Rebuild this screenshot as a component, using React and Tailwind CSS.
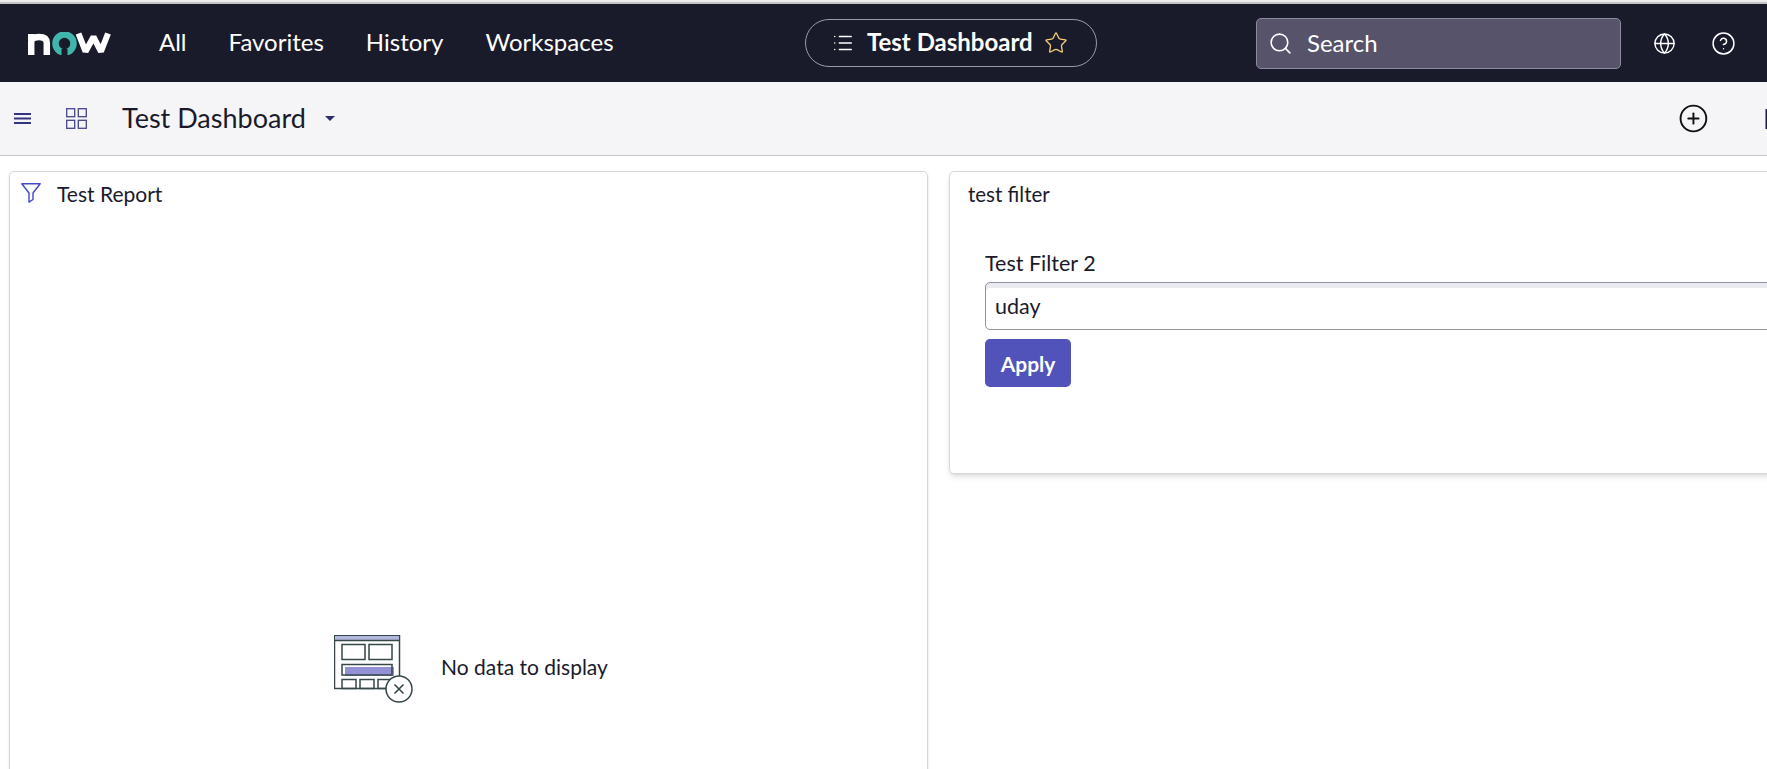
import { Search, Globe, CircleHelp, Star, List, CirclePlus } from 'lucide-react';

const navLinks = ['All', 'Favorites', 'History', 'Workspaces'];

function NowLogo() {
  return (
    <svg width="83" height="23" viewBox="0 0 83 23" fill="none" className="shrink-0">
      <path d="M3.2 23V10C3.2 6.5 6.5 5 11 5S18.8 6.5 18.8 11V23" stroke="#fff" strokeWidth="6.5" />
      <path d="M3.2 2V8" stroke="#fff" strokeWidth="6.5" />
      <circle cx="36.5" cy="11.5" r="9" stroke="#3fb5ab" strokeWidth="6.5" />
      <rect x="33.5" y="17" width="6" height="6" fill="#1a1b2a" />
      <path d="M50.5 1.5L57.5 19.5L65.5 5L73 19.5L80 1.5" stroke="#fff" strokeWidth="6" strokeLinejoin="bevel" />
    </svg>
  );
}

function NoDataIcon() {
  return (
    <svg width="80" height="68" viewBox="0 0 80 68" fill="none" stroke="#36474a" strokeWidth="1.5">
      <rect x="0.5" y="0.5" width="65" height="53" fill="#fff" />
      <rect x="1" y="1" width="64" height="4" fill="#b4b7dc" stroke="none" />
      <path d="M0.5 5.5H65.5" />
      <rect x="8" y="9.5" width="23" height="15" />
      <rect x="35" y="9.5" width="23" height="15" />
      <rect x="11" y="32" width="49" height="9" fill="#9491d6" stroke="none" />
      <rect x="8" y="29.5" width="50" height="10.5" />
      <rect x="8" y="44.5" width="14" height="9" />
      <rect x="26" y="44.5" width="14" height="9" />
      <rect x="44" y="44.5" width="14" height="9" />
      <circle cx="65" cy="54" r="13" fill="#fff" />
      <path d="M60.5 49.5L69.5 58.5M69.5 49.5L60.5 58.5" strokeWidth="1.6" />
    </svg>
  );
}

function FunnelIcon() {
  return (
    <svg width="20" height="20" viewBox="0 0 20 20" fill="none" stroke="#4548c4" strokeWidth="1.4" className="shrink-0">
      <path d="M0.8 0.8H19.2L12 10V16.5L8 19.2V10Z" strokeLinejoin="round" />
    </svg>
  );
}

function BarsIcon() {
  return (
    <svg width="17" height="11" viewBox="0 0 17 11" stroke="#33337f" strokeWidth="2" className="ml-[14px] shrink-0">
      <path d="M0 1H17M0 5.5H17M0 10H17" />
    </svg>
  );
}

function GridIcon() {
  return (
    <svg width="21" height="21" viewBox="0 0 21 21" fill="none" stroke="#46468a" strokeWidth="1.3" className="ml-[35px] shrink-0">
      <rect x="0.7" y="0.7" width="8" height="8" />
      <rect x="12.3" y="0.7" width="8" height="8" />
      <rect x="0.7" y="12.3" width="8" height="8" />
      <rect x="12.3" y="12.3" width="8" height="8" />
    </svg>
  );
}

export default function App() {
  return (
    <div className="h-screen w-full overflow-hidden bg-white font-['Lato','Liberation_Sans',sans-serif] text-[#1a1a2a]">
      <div className="h-[4px] border-t-2 border-[#ececec] bg-[#c4c4c4]" />

      <header className="flex h-[78px] items-center bg-[#1a1b2a] text-white">
        <div className="ml-[28px]">
          <NowLogo />
        </div>
        <nav className="mb-[2px] ml-[48px] flex w-[454px] gap-[42px] text-[24px]">
          {navLinks.map((l) => (
            <span key={l}>{l}</span>
          ))}
        </nav>
        <div className="ml-[192px] flex h-[48px] w-[292px] items-center rounded-full border border-[#9a9aa4] pl-[26px]">
          <List size={22} strokeWidth={1.7} />
          <span className="mb-[2px] ml-[13px] text-[24px] font-bold">Test Dashboard</span>
          <Star size={24} strokeWidth={1.3} className="ml-[11px] text-[#f3cd79]" />
        </div>
        <div className="ml-[159px] flex h-[51px] w-[365px] items-center rounded-[5px] border border-[#8d8a9c] bg-[#57536b] pl-[11px]">
          <Search size={25} strokeWidth={1.5} />
          <span className="ml-[14px] text-[24px]">Search</span>
        </div>
        <Globe size={23} strokeWidth={1.5} className="ml-[32px]" />
        <CircleHelp size={25} strokeWidth={1.4} className="ml-[35px]" />
      </header>

      <div className="flex h-[74px] items-center border-b border-[#c5c5ca] bg-[#f5f5f8]">
        <BarsIcon />
        <GridIcon />
        <h1 className="ml-[35px] w-[186px] text-[27px] font-normal">Test Dashboard</h1>
        <span className="ml-[18px] h-0 w-0 border-x-[5px] border-t-[5px] border-x-transparent border-t-[#2c2c6e]" />
        <CirclePlus size={31} strokeWidth={1.5} className="ml-[1343px] text-[#111]" />
        <span className="ml-[56px] h-[20px] w-[2px] shrink-0 border-l border-[#c97a1e] bg-[#1a1a4a]" />
      </div>

      <main className="flex gap-[21px] pl-[9px] pt-[15px]">
        <section className="flex h-[948px] w-[919px] shrink-0 flex-col rounded-[5px] border border-[#d6d7dc] shadow-sm">
          <div className="flex h-[42px] items-center pl-[11px]">
            <FunnelIcon />
            <span className="ml-[16px] pt-[2px] text-[21px]">Test Report</span>
          </div>
          <div className="flex flex-1 items-center justify-center gap-[27px] pl-[5px]">
            <div className="mt-[5px]">
              <NoDataIcon />
            </div>
            <span className="mt-[2px] text-[21px]">No data to display</span>
          </div>
        </section>

        <section className="h-[303px] w-[1000px] shrink-0 rounded-[5px] border border-[#d6d7dc] pl-[18px] shadow-md">
          <div className="flex h-[42px] items-center pt-[2px] text-[20.5px]">test filter</div>
          <div className="pl-[17px] pt-[37px]">
            <label className="block text-[21.5px] leading-[24px]">Test Filter 2</label>
            <div className="mt-[7px] flex h-[48px] items-center rounded-[5px] border border-[#8f93a3] pl-[9px] text-[21.5px] shadow-[inset_0_5px_0_#e8eaef]">
              uday
            </div>
            <button className="mt-[9px] h-[48px] w-[86px] rounded-[5px] bg-[#5153bb] pt-[2px] text-[21px] font-bold text-white">
              Apply
            </button>
          </div>
        </section>
      </main>
    </div>
  );
}
